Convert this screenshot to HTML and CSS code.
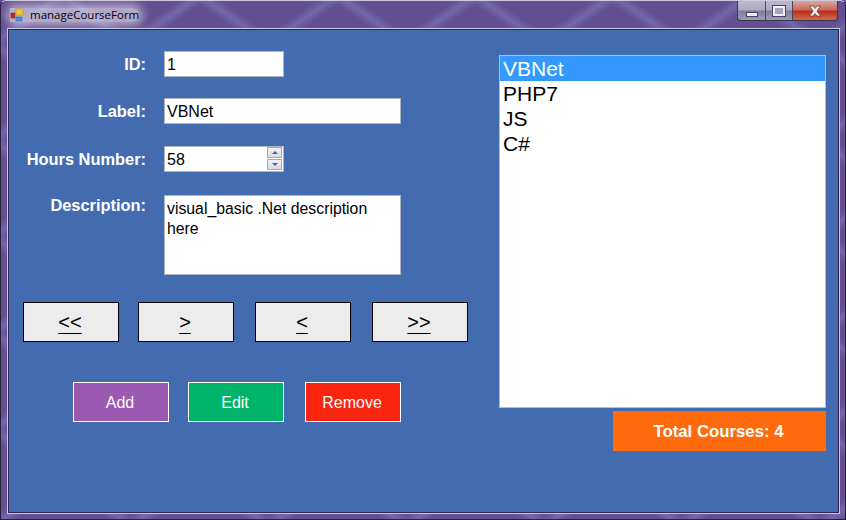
FILE: index.html
```html
<!DOCTYPE html>
<html lang="en">
<head>
  <meta charset="UTF-8" />
  <title>manageCourseForm</title>
  <link rel="stylesheet" href="styles.css">
</head>
<body>
  <div class="window">
    <div class="title-bar">
      <div class="title-label">
        <svg class="app-icon" width="14" height="14" viewBox="0 0 14 14">
          <rect x="0" y="0" width="14" height="14" fill="#b9b4c4" />
          <rect x="1" y="5" width="4" height="5" fill="#c0282a" stroke="#6e2a2a" stroke-width="0.6" />
          <rect x="6" y="1" width="7" height="6" fill="#f5c63c" stroke="#b98a1e" stroke-width="0.6" />
          <rect x="6" y="9" width="6" height="4" fill="#4c8fdc" stroke="#2f63a8" stroke-width="0.6" />
        </svg>
        <span class="title-text">manageCourseForm</span>
      </div>
      <div class="window-controls">
        <div class="ctl ctl-min"><span class="min-glyph"></span></div>
        <div class="ctl ctl-max"><span class="max-glyph"></span></div>
        <div class="ctl ctl-close">
          <svg width="14" height="12" viewBox="0 0 14 12">
            <path d="M1.5 1 H5 L7 3.5 L9 1 H12.5 L8.8 6 L12.5 11 H9 L7 8.5 L5 11 H1.5 L5.2 6 Z" fill="#f4f0f0" stroke="#5c3a3a" stroke-width="0.7" />
          </svg>
        </div>
      </div>
    </div>

    <div class="client">
      <div class="left-col">
        <div class="field field-id">
          <label>ID:</label>
          <input class="input input-short" type="text" value="1" />
        </div>
        <div class="field field-label">
          <label>Label:</label>
          <input class="input input-long" type="text" value="VBNet" />
        </div>
        <div class="field field-hours">
          <label>Hours Number:</label>
          <div class="spinner">
            <span class="spin-value">58</span>
            <div class="spin-btns">
              <div class="spin-btn"><i class="arrow-up"></i></div>
              <div class="spin-btn"><i class="arrow-down"></i></div>
            </div>
          </div>
        </div>
        <div class="field field-desc">
          <label>Description:</label>
          <div class="textarea">visual_basic .Net description here</div>
        </div>

        <div class="nav-row">
          <button class="nav-btn">&lt;&lt;</button>
          <button class="nav-btn">&gt;</button>
          <button class="nav-btn">&lt;</button>
          <button class="nav-btn">&gt;&gt;</button>
        </div>

        <div class="action-row">
          <button class="action-btn add">Add</button>
          <button class="action-btn edit">Edit</button>
          <button class="action-btn remove">Remove</button>
        </div>
      </div>

      <div class="right-col">
        <ul class="course-list">
          <li class="selected">VBNet</li>
          <li>PHP7</li>
          <li>JS</li>
          <li>C#</li>
        </ul>
        <div class="total">Total Courses: 4</div>
      </div>
    </div>
  </div>
</body>
</html>
```

FILE: styles.css
```css
* {
  box-sizing: border-box;
  margin: 0;
  padding: 0;
}

body {
  width: 846px;
  height: 520px;
  overflow: hidden;
  font-family: "Liberation Sans", Arial, sans-serif;
  background: #634f92;
}

.window {
  width: 846px;
  height: 520px;
  display: flex;
  flex-direction: column;
  border: 1px solid #2a1f3d;
  border-top-color: #cfc9dc;
  border-radius: 6px 6px 0 0;
  background-color: #634f92;
  background-image:
    repeating-linear-gradient(35deg, transparent 0, transparent 61px, rgba(130, 130, 195, 0.48) 69px, transparent 77px, transparent 79px),
    repeating-linear-gradient(-35deg, transparent 0, transparent 1px, rgba(130, 130, 195, 0.48) 9px, transparent 17px, transparent 79px);
}

.title-bar {
  height: 28px;
  display: flex;
  align-items: flex-start;
  flex-shrink: 0;
  overflow: hidden;
}

.title-label {
  margin: 7px 0 0 9px;
  height: 14px;
  display: flex;
  align-items: center;
  background: rgba(226, 222, 236, 0.62);
  box-shadow: 0 0 10px 4px rgba(226, 222, 236, 0.62);
  border-radius: 7px;
}

.title-text {
  margin-left: 6px;
  font-family: "Open Sans", sans-serif;
  font-size: 11.5px;
  line-height: 16px;
  color: #050308;
}

.window-controls {
  margin-left: auto;
  margin-right: 7px;
  display: flex;
  width: 101px;
  height: 20px;
  border: 1px solid #3d3450;
  border-top: none;
  border-radius: 0 0 4px 4px;
  overflow: hidden;
}

.ctl {
  height: 100%;
  display: flex;
  align-items: center;
  justify-content: center;
  border-right: 1px solid #4d4560;
}

.ctl-min,
.ctl-max {
  background: linear-gradient(to bottom, #bdb9d0 0, #aeaac4 45%, #837c9c 55%, #98a0b4 100%);
}

.ctl-min {
  width: 28px;
}

.ctl-max {
  width: 27px;
}

.ctl-close {
  flex: 1;
  border-right: none;
  background: linear-gradient(to bottom, #d8a8a0 0, #cc6a58 45%, #b8301c 55%, #cf6a50 100%);
}

.min-glyph {
  width: 12px;
  height: 5px;
  margin-top: 7px;
  background: #f0eef4;
  border: 1px solid #4a4460;
}

.max-glyph {
  width: 12px;
  height: 10px;
  background: #a8a4bc;
  border: 2px solid #f0eef4;
  outline: 1px solid #4a4460;
}

.client {
  flex: 1;
  margin: 0 6px 6px 7px;
  display: flex;
  background: #436cb0;
  border: 1px solid #2e2550;
  box-shadow: 0 0 0 1px #cdc8dc;
}

.left-col {
  width: 490px;
  padding: 21px 0 0 14px;
}

.field {
  display: flex;
  align-items: center;
  height: 26px;
}

.field-id {
  margin-bottom: 21px;
}

.field-label {
  margin-bottom: 22px;
}

.field-hours {
  margin-bottom: 23px;
}

.field label {
  width: 123px;
  margin-right: 18px;
  padding-top: 1px;
  text-align: right;
  color: #fff;
  font-size: 16.4px;
  font-weight: bold;
}

.input,
.spinner,
.textarea {
  background: #fff;
  border: 1px solid #aeb4c0;
  font-family: "Liberation Sans", Arial, sans-serif;
  font-size: 16px;
  color: #000;
}

.input {
  height: 26px;
  padding: 2px 2px 0;
  outline: none;
}

.input-short {
  width: 120px;
}

.input-long {
  width: 237px;
}

.spinner {
  width: 120px;
  height: 26px;
  padding-left: 2px;
  display: flex;
  align-items: center;
  justify-content: space-between;
}

.spin-value {
  padding-top: 2px;
}

.spin-btns {
  width: 15px;
  height: 23px;
  margin-right: 1px;
  align-self: flex-start;
  display: flex;
  flex-direction: column;
  gap: 1px;
  background: #fff;
}

.spin-btn {
  flex: 1;
  display: flex;
  align-items: center;
  justify-content: center;
  background: linear-gradient(to bottom, #f2f2f4, #d8dae4);
  border: 1px solid #a8a8a8;
}

.arrow-up,
.arrow-down {
  width: 0;
  height: 0;
  border-left: 3px solid transparent;
  border-right: 3px solid transparent;
}

.arrow-up {
  border-bottom: 3px solid #4d5f9c;
}

.arrow-down {
  border-top: 3px solid #4d5f9c;
}

.field-desc {
  height: 80px;
  align-items: flex-start;
  margin-bottom: 27px;
}

.textarea {
  width: 237px;
  height: 80px;
  padding: 3px 2px;
  font-size: 15.8px;
  line-height: 20px;
}

.nav-row {
  display: flex;
  gap: 21px;
}

.nav-btn {
  width: 96px;
  height: 40px;
  padding-right: 2px;
  background: #ececec;
  border: 1px solid #000;
  font-family: "Liberation Sans", Arial, sans-serif;
  font-size: 20px;
  color: #000;
  text-decoration: underline;
  text-decoration-thickness: 1px;
  text-underline-offset: 4px;
}

.nav-btn:first-child {
  margin-right: -2px;
}

.action-row {
  display: flex;
  gap: 19px;
  margin: 40px 0 0 50px;
}

.action-btn {
  width: 96px;
  height: 40px;
  padding: 1px 2px 0 0;
  border: 1px solid #fff;
  color: #fff;
  font-family: "Liberation Sans", Arial, sans-serif;
  font-size: 16px;
}

.add {
  background: #9b59b1;
}

.edit {
  background: #00b36b;
}

.remove {
  margin-left: 2px;
  background: #fa2510;
}

.right-col {
  flex: 1;
  padding: 25px 12px 0 0;
  display: flex;
  flex-direction: column;
  align-items: flex-end;
}

.course-list {
  width: 327px;
  height: 353px;
  list-style: none;
  background: #fff;
  border: 1px solid #b8bcc6;
}

.course-list li {
  height: 25px;
  padding-left: 3px;
  font-size: 21px;
  line-height: 26px;
  color: #000;
}

.course-list li.selected {
  background: #3399ff;
  color: #fff;
}

.total {
  width: 213px;
  height: 40px;
  margin-top: 3px;
  padding: 1px 2px 0 0;
  background: #ff6a0d;
  color: #fff;
  font-size: 16.8px;
  font-weight: bold;
  display: flex;
  align-items: center;
  justify-content: center;
}
```
